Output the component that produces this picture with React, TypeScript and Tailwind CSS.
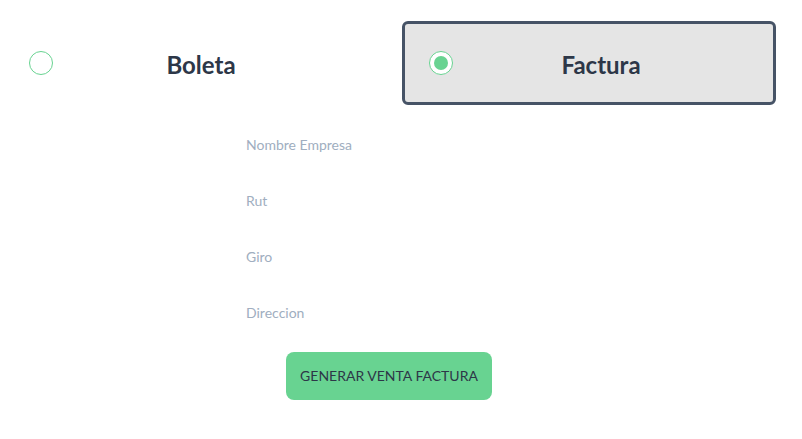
import { useState } from "react";

type Tipo = "boleta" | "factura";

const campos = ["Nombre Empresa", "Rut", "Giro", "Direccion"];

const Radio = ({ checked }: { checked: boolean }) => (
  <span className="w-6 h-6 rounded-full border border-[#68d391] bg-white flex items-center justify-center shrink-0">
    {checked && <span className="w-[14px] h-[14px] rounded-full bg-[#68d391]" />}
  </span>
);

export default function App() {
  const [tipo, setTipo] = useState<Tipo>("factura");

  const opcion = (value: Tipo, label: string) => {
    const active = tipo === value;
    return (
      <button
        type="button"
        onClick={() => setTipo(value)}
        className={`w-[374px] h-[84px] flex items-center px-6 rounded-md border-[3px] ${
          active ? "bg-[#e5e5e5] border-[#465366]" : "bg-white border-transparent"
        }`}
      >
        <Radio checked={active} />
        <span className="flex-1 text-center text-2xl font-bold text-[#2d3748] pt-1">
          {label}
        </span>
      </button>
    );
  };

  return (
    <div
      className="min-h-screen bg-white"
      style={{ fontFamily: "Lato, 'Noto Sans', sans-serif" }}
    >
      <div className="flex gap-[26px] pl-[2px] pt-[21px]">
        {opcion("boleta", "Boleta")}
        {opcion("factura", "Factura")}
      </div>

      {tipo === "factura" && (
        <form className="pl-[246px] pt-[30px]">
          <div className="flex flex-col gap-4">
            {campos.map((campo) => (
              <div key={campo}>
                <label className="block text-sm text-[#a0aec0] leading-5">
                  {campo}
                </label>
                <input
                  className="block w-[300px] h-5 bg-transparent outline-none text-sm text-[#2d3748]"
                  aria-label={campo}
                />
              </div>
            ))}
          </div>
          <button
            type="button"
            className="ml-10 mt-[9px] w-[206px] h-12 rounded-lg bg-[#68d391] text-sm text-[#2d3748] uppercase"
          >
            Generar venta factura
          </button>
        </form>
      )}
    </div>
  );
}
